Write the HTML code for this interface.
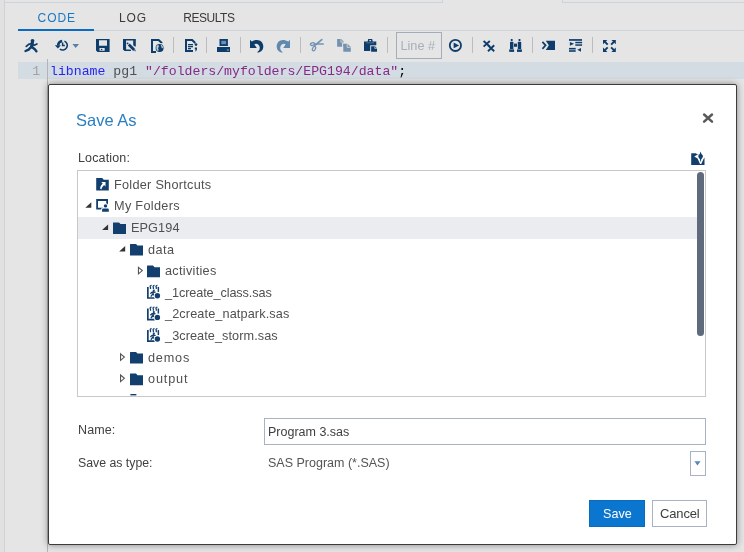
<!DOCTYPE html>
<html><head><meta charset="utf-8">
<style>
*{margin:0;padding:0;box-sizing:border-box}
html,body{width:744px;height:552px;overflow:hidden;background:#e5e5e5;font-family:"Liberation Sans",sans-serif}
#w{position:absolute;left:0;top:0;width:744px;height:552px;overflow:hidden;background:#e5e5e5;will-change:transform}
.a{position:absolute}
.t{position:absolute;white-space:nowrap;line-height:1}
.sep{position:absolute;top:37px;width:1px;height:16px;background:#bcbcbc}
.tr{position:absolute;white-space:nowrap;line-height:1;font-size:12.7px;color:#505050;letter-spacing:0.1px}
svg{position:absolute;left:0;top:0;overflow:visible}
</style></head><body><div id="w">
<div class="a" style="left:0;top:0;width:4px;height:552px;background:#e1e1e1"></div>
<div class="a" style="left:4px;top:0;width:1px;height:552px;background:#cfd3d8"></div>
<div class="a" style="left:4px;top:2px;width:438px;height:1px;background:#cdd3da"></div>
<div class="a" style="left:562px;top:2px;width:182px;height:1px;background:#cdd3da"></div>
<div class="a" style="left:442px;top:0;width:1px;height:3px;background:#cdd3da"></div>
<div class="a" style="left:562px;top:0;width:1px;height:3px;background:#cdd3da"></div>
<div class="t" style="left:37.6px;top:12px;font-size:12px;color:#1a78c2;letter-spacing:0.95px">CODE</div>
<div class="t" style="left:119px;top:12px;font-size:12px;color:#3a3a3a;letter-spacing:0.85px">LOG</div>
<div class="t" style="left:183.2px;top:12px;font-size:12px;color:#3a3a3a;letter-spacing:-0.45px">RESULTS</div>
<div class="a" style="left:94px;top:30px;width:650px;height:1px;background:#cfd4da"></div>
<div class="a" style="left:18px;top:29px;width:76px;height:2px;background:#0b6bc0"></div>
<div class="sep" style="left:173px"></div>
<div class="sep" style="left:206px"></div>
<div class="sep" style="left:240px"></div>
<div class="sep" style="left:300px"></div>
<div class="sep" style="left:387px"></div>
<div class="sep" style="left:472px"></div>
<div class="sep" style="left:532px"></div>
<div class="sep" style="left:592px"></div>
<div class="a" style="left:396px;top:32px;width:46px;height:27px;border:1px solid #a3acb9"></div>
<div class="t" style="left:400.5px;top:39.8px;font-size:12.7px;color:#a8b0bc">Line #</div>
<svg width="744" height="60">
 <circle cx="32.5" cy="40.8" r="1.9" fill="#0f3d6b"/>
 <g fill="none" stroke="#0f3d6b" stroke-linecap="round" stroke-linejoin="round">
  <path d="M32.4 42.4 L31.6 46.8" stroke-width="3.2"/>
  <path d="M26.3 46.4 L28.6 44.3 L31.4 43.5" stroke-width="1.8"/>
  <path d="M32.8 44.8 L34.8 45.1 L36.9 44" stroke-width="1.7"/>
  <path d="M31 47.2 L28.6 49.6 L25.5 51" stroke-width="2.4"/>
  <path d="M32.2 47.2 L34.8 49.2 L36.4 51.2" stroke-width="2.4"/>
 </g>
 <g fill="none" stroke="#0f3d6b">
  <path d="M64.42 41.13 A4.6 4.6 0 1 1 59.87 49.02" stroke-width="1.6"/>
  <path d="M62.6 42.4 V45.5 H64.9" stroke-width="1.5"/>
  <path d="M62.18 41.13 A4.3 4.3 0 0 0 58.2 45.4" stroke-width="2.7"/>
 </g>
 <polygon points="54.9,45.2 60.9,45.2 57.9,48.4" fill="#0f3d6b"/>
 <polygon points="72.4,44 79,44 75.7,48" fill="#5b7fa8"/>
 <path fill="#0f3d6b" fill-rule="evenodd" d="M96 39 H109.6 V52 H97.6 L96 50.4 Z M99 40.3 V45.8 H107 V40.3 Z M99.5 48.1 V50.8 H104.7 V48.1 Z"/>
 <circle cx="101.6" cy="49.45" r="0.8" fill="#0f3d6b"/>
 <path fill="#0f3d6b" d="M123 39 H135.8 V46.6 H133.2 V40.5 H126.1 V49.4 H131 V51.1 H124.6 L123 49.5 Z"/>
 <path d="M128 43.6 L135 50.6" stroke="#e5e5e5" stroke-width="5" stroke-linecap="butt"/>
 <path d="M128.8 44.6 L134.2 50" stroke="#0f3d6b" stroke-width="2.8" stroke-linecap="butt"/>
 <path d="M134 50.6 L135.8 51.6 L135.2 49.6 Z" fill="#0f3d6b"/>
 <circle cx="127.6" cy="43.4" r="0.9" fill="#0f3d6b"/>
 <path d="M156 52 H152 V40 H158.6 L162 43.3" fill="none" stroke="#0f3d6b" stroke-width="2"/>
 <circle cx="159.6" cy="47.9" r="5" fill="#e5e5e5"/>
 <circle cx="159.6" cy="47.9" r="4" fill="#0f3d6b"/>
 <path d="M156.4 46.2 Q157.6 44.8 158.6 45.2 L158.9 46.6 L158 48.2 L158.8 50.2 L157.6 51 Q155.8 49.6 156.4 46.2 Z M160.6 44.3 Q162.6 45.2 163.2 47.2 L162 48.4 L161.4 47 Z" fill="#e5e5e5" opacity="0.85"/>
 <path d="M193 51 H186 V40 H192.2 L195.2 43" fill="none" stroke="#0f3d6b" stroke-width="2"/>
 <rect x="188" y="44" width="5" height="1.3" fill="#0f3d6b"/>
 <rect x="188" y="46" width="5" height="1.3" fill="#0f3d6b"/>
 <rect x="188" y="48" width="3" height="1.3" fill="#0f3d6b"/>
 <circle cx="196" cy="44.6" r="1.35" fill="#0f3d6b"/>
 <path d="M194.8 47.4 H197 V49.6 L195.8 51.4 L195.2 51 L195.8 49.6 H194.8 Z" fill="#0f3d6b"/>
 <rect x="220.4" y="39.9" width="6.6" height="5.2" fill="#6f8fae" stroke="#0f3d6b" stroke-width="1.8"/>
 <rect x="217" y="47" width="13" height="5" fill="#0f3d6b"/>
 <rect x="226.8" y="49.3" width="2.2" height="1.4" fill="#6f8fae"/>
 <path fill="#0f3d6b" d="M250 39.8 L251.7 41.6 C253.4 40.5 255.2 40 257 40 C260.6 40 263.3 42.8 263.3 46.4 C263.3 49.9 260.8 52.3 257.6 52.5 L257.2 52.1 C259.1 51 260 49.2 259.7 47.2 C259.4 45 257.8 43.7 256.1 43.7 C255.4 43.7 254.8 43.9 254.3 44.3 L256.8 48 H250 Z"/>
 <g transform="translate(540 0) scale(-1 1)">
  <path fill="#6189b0" d="M250 39.8 L251.7 41.6 C253.4 40.5 255.2 40 257 40 C260.6 40 263.3 42.8 263.3 46.4 C263.3 49.9 260.8 52.3 257.6 52.5 L257.2 52.1 C259.1 51 260 49.2 259.7 47.2 C259.4 45 257.8 43.7 256.1 43.7 C255.4 43.7 254.8 43.9 254.3 44.3 L256.8 48 H250 Z"/>
 </g>
 <g fill="none" stroke="#7393b3" stroke-linecap="round">
  <ellipse cx="312.5" cy="44.1" rx="2.1" ry="1.3" transform="rotate(-12 312.5 44.1)" stroke-width="1.3"/>
  <ellipse cx="314" cy="48.6" rx="1.4" ry="2.3" transform="rotate(25 314 48.6)" stroke-width="1.3"/>
  <path d="M314.6 45.6 L321.8 39.6" stroke-width="1.7"/>
  <path d="M315 44.1 L323.2 43.9" stroke-width="1.5"/>
 </g>
 <path fill="#7591ae" d="M337.1 39.1 H341.2 L343.9 41.8 V46.8 H337.1 Z"/>
 <path d="M340.9 39.3 V42.1 H343.7" fill="none" stroke="#e5e5e5" stroke-width="0.7"/>
 <path fill="none" stroke="#e5e5e5" stroke-width="1.2" d="M342.7 43.1 H347.6 L351.4 46.9 V52.4 H342.7 Z"/>
 <path fill="#7591ae" d="M343.3 43.7 H347.4 L350.8 47.1 V51.8 H343.3 Z"/>
 <path d="M347.2 43.9 V47.3 H350.6" fill="none" stroke="#e5e5e5" stroke-width="0.8"/>
 <path fill="#0f3d6b" d="M364 41.6 H376.3 V51 H364 Z M367.6 41.8 L368.2 39 H372.2 L372.8 41.8 Z"/>
 <rect x="369.3" y="40.1" width="1.8" height="1.1" fill="#e5e5e5"/>
 <rect x="366.4" y="42.6" width="7.8" height="0.6" fill="#e5e5e5" opacity="0.55"/>
 <rect x="370.2" y="45.3" width="7.6" height="7.2" fill="#e5e5e5"/>
 <path fill="#0f3d6b" d="M371.1 46.2 H375 L377 48.2 V51.8 H371.1 Z"/>
 <path d="M374.8 46.4 V48.4 H376.8" fill="none" stroke="#e5e5e5" stroke-width="0.7"/>
 <circle cx="455.4" cy="45.4" r="5.6" fill="none" stroke="#0f3d6b" stroke-width="1.8"/>
 <polygon points="453.6,42.5 459.2,45.4 453.6,48.3" fill="#0f3d6b"/>
 <g stroke="#0f3d6b" stroke-width="1.9">
  <path d="M483.6 41 L489.8 46.6 M489.8 41 L483.6 46.6"/>
  <path d="M488 45.3 L494.2 51.2 M494.2 45.3 L488 51.2"/>
 </g>
 <g fill="#0f3d6b">
  <rect x="510.8" y="39" width="1.8" height="2.2"/>
  <rect x="510" y="41.9" width="3.4" height="7.1"/>
  <rect x="509.2" y="49.4" width="4.9" height="2.5"/>
  <rect x="518.6" y="39" width="1.8" height="2.2"/>
  <rect x="517.8" y="41.9" width="3.4" height="7.1"/>
  <rect x="517" y="49.4" width="4.9" height="2.5"/>
  <rect x="514" y="43.6" width="3" height="3.2"/>
 </g>
 <path d="M542.4 41.9 L545.6 45.35 L542.4 48.8" fill="none" stroke="#0f3d6b" stroke-width="1.7"/>
 <path fill="#0f3d6b" d="M545.8 40.8 H555 V49.9 H545.8 L548.8 45.35 Z"/>
 <g fill="#0f3d6b">
  <rect x="569" y="39.1" width="13" height="1.7"/>
  <polygon points="569.9,41.9 574.1,43.8 569.9,45.7"/>
  <rect x="575.3" y="41.8" width="6.8" height="1.5"/>
  <rect x="575.3" y="44.3" width="6.8" height="1.5"/>
  <rect x="569" y="47.9" width="6.7" height="1.6"/>
  <rect x="569" y="50.2" width="6.7" height="1.6"/>
  <polygon points="581,47.9 577.3,49.85 581,51.8"/>
 </g>
 <g fill="#0f3d6b">
  <polygon points="603,39.9 607.4,39.9 603,44.3"/>
  <polygon points="615.8,39.9 611.4,39.9 615.8,44.3"/>
  <polygon points="603,52 607.4,52 603,47.6"/>
  <polygon points="615.8,52 611.4,52 615.8,47.6"/>
 </g>
 <g stroke="#0f3d6b" stroke-width="1.9">
  <path d="M604.6 41.5 L607.7 44.6 M614.2 41.5 L611.1 44.6 M604.6 50.4 L607.7 47.3 M614.2 50.4 L611.1 47.3"/>
 </g>
</svg>
<div class="a" style="left:18px;top:62px;width:726px;height:17px;background:#d3dbe3"></div>
<div class="a" style="left:47px;top:59px;width:1px;height:493px;background:#b4b4b4"></div>
<div class="t" style="left:32.3px;top:64.5px;font-family:'Liberation Mono',monospace;font-size:13.2px;color:#a3a3a3">1</div>
<div class="t" style="left:50px;top:64.5px;font-family:'Liberation Mono',monospace;font-size:13.2px;color:#505050"><span style="color:#2626f2">libname</span> pg1 <span style="color:#872a87">"/folders/myfolders/EPG194/data"</span><span style="color:#000">;</span></div>
<div class="a" style="left:48px;top:84px;width:689px;height:461px;background:#fff;border:1px solid #3c3c3c;border-radius:2px;box-shadow:0 0 7px rgba(0,0,0,0.42)"></div>
<div class="t" style="left:76px;top:112px;font-size:16.5px;color:#2a7fc2">Save As</div>
<svg width="744" height="552"><path d="M704.1 114.5 L712 121.7 M712 114.5 L704.1 121.7" stroke="#5a5a5a" stroke-width="2.5" stroke-linecap="round"/></svg>
<div class="t" style="left:78px;top:152px;font-size:12.5px;color:#404040;letter-spacing:0.15px">Location:</div>
<div class="a" style="left:77px;top:170px;width:629px;height:227px;border:1px solid #c8c8c8;overflow:hidden"><div class="a" style="left:0;top:46.2px;width:619px;height:21.5px;background:#ebecef"></div><div class="a" style="left:619px;top:1px;width:7px;height:164px;border-radius:3.5px;background:#5f6b7d"></div></div>
<div class="tr" style="left:114px;top:178.75px;letter-spacing:0.27px">Folder Shortcuts</div>
<div class="tr" style="left:114px;top:200.35px;letter-spacing:0.31px">My Folders</div>
<div class="tr" style="left:131px;top:221.95px;letter-spacing:0.1px">EPG194</div>
<div class="tr" style="left:148px;top:243.55px;letter-spacing:0.43px">data</div>
<div class="tr" style="left:165px;top:265.15px;letter-spacing:0.29px">activities</div>
<div class="tr" style="left:165px;top:286.75px;letter-spacing:-0.11px">_1create_class.sas</div>
<div class="tr" style="left:165px;top:308.35px;letter-spacing:0.12px">_2create_natpark.sas</div>
<div class="tr" style="left:165px;top:329.95px;letter-spacing:0.07px">_3create_storm.sas</div>
<div class="tr" style="left:148px;top:351.55px;letter-spacing:0.8px">demos</div>
<div class="tr" style="left:148px;top:373.15px;letter-spacing:0.84px">output</div>
<svg width="744" height="552"><path fill="#133f6e" d="M96.2 178.1 H102.3 L103.7 179.7 H108.8 V190.6 H96.2 Z"/><path fill="#fff" d="M101.2 182.1 H105.5 V186.4 L104.1 185 C102.8 186.2 101.9 187.6 101.3 189.6 L100 188.2 C100.5 186.4 101.5 184.9 102.7 183.6 Z"/><path fill="none" stroke="#133f6e" stroke-width="1.8" d="M103 208.7 H97.1 V200 H107.1 V205"/><circle cx="105.5" cy="206" r="2.7" fill="#fff"/><circle cx="105.5" cy="206" r="1.75" fill="#133f6e"/><path fill="#fff" d="M101 212.4 V209.4 Q101 207.8 102.8 207.8 H108 Q110 207.8 110 209.4 V212.4 Z"/><path fill="#133f6e" d="M102.1 211.8 V209.6 Q102.1 208.6 103.2 208.6 H107.7 Q108.8 208.6 108.8 209.6 V211.8 Z"/><path fill="#133f6e" d="M113 222.8 Q113 222.4 113.4 222.4 H119 L120.5 224.0 H126 V234.0 H113 Z"/><path fill="#133f6e" d="M130 244.4 Q130 244.0 130.4 244.0 H136 L137.5 245.6 H143 V255.6 H130 Z"/><path fill="#133f6e" d="M147 266.0 Q147 265.6 147.4 265.6 H153 L154.5 267.20000000000005 H160 V277.20000000000005 H147 Z"/><path fill="#133f6e" d="M130 352.4 Q130 352.0 130.4 352.0 H136 L137.5 353.6 H143 V363.6 H130 Z"/><path fill="#133f6e" d="M130 374.0 Q130 373.6 130.4 373.6 H136 L137.5 375.20000000000005 H143 V385.20000000000005 H130 Z"/><rect x="130.4" y="394" width="6" height="1.4" fill="#133f6e"/><polygon fill="#333" points="91.3,202.2 91.3,207.79999999999998 85.3,207.79999999999998"/><polygon fill="#333" points="108.1,224.4 108.1,230.0 102.1,230.0"/><polygon fill="#333" points="125.2,245.9 125.2,251.5 119.2,251.5"/><polygon fill="none" stroke="#555" stroke-width="1.1" points="138.45000000000002,267.3 142.3,270.59999999999997 138.45000000000002,273.9"/><polygon fill="none" stroke="#555" stroke-width="1.1" points="120.55,353.8 124.4,357.09999999999997 120.55,360.4"/><polygon fill="none" stroke="#555" stroke-width="1.1" points="120.55,375.0 124.4,378.29999999999995 120.55,381.59999999999997"/><path fill="none" stroke="#133f6e" stroke-width="1.7" d="M147.85 286.9 V298.0 H154.8"/><rect x="157.6" y="286.9" width="1.5" height="5" fill="#133f6e"/><path fill="none" stroke="#133f6e" stroke-width="1.25" d="M151.6 285.4 Q149.9 285.4 150.20000000000002 287.2 M150.5 287.09999999999997 V289.09999999999997"/><path fill="none" stroke="#133f6e" stroke-width="1.25" d="M154.5 285.4 Q152.8 285.4 153.10000000000002 287.2 M153.4 287.09999999999997 V289.09999999999997"/><path fill="none" stroke="#133f6e" stroke-width="1.25" d="M157.39999999999998 285.4 Q155.7 285.4 156.0 287.2 M156.29999999999998 287.09999999999997 V289.09999999999997"/><circle cx="153.8" cy="290.5" r="1.1" fill="#133f6e"/><path fill="none" stroke="#133f6e" stroke-width="1.4" stroke-linecap="round" d="M153.5 291.5 L152.9 293.9 M150.8 293.29999999999995 L152.2 292.09999999999997 L153.4 291.9 L155.1 292.29999999999995 M152.9 293.9 L151.2 296.09999999999997 M153 293.9 L154.6 295.5"/><circle cx="157.4" cy="295.79999999999995" r="3.5" fill="#fff"/><circle cx="157.4" cy="295.79999999999995" r="2.7" fill="#133f6e"/><path fill="none" stroke="#133f6e" stroke-width="1.7" d="M147.85 308.5 V319.6 H154.8"/><rect x="157.6" y="308.5" width="1.5" height="5" fill="#133f6e"/><path fill="none" stroke="#133f6e" stroke-width="1.25" d="M151.6 307.0 Q149.9 307.0 150.20000000000002 308.8 M150.5 308.7 V310.7"/><path fill="none" stroke="#133f6e" stroke-width="1.25" d="M154.5 307.0 Q152.8 307.0 153.10000000000002 308.8 M153.4 308.7 V310.7"/><path fill="none" stroke="#133f6e" stroke-width="1.25" d="M157.39999999999998 307.0 Q155.7 307.0 156.0 308.8 M156.29999999999998 308.7 V310.7"/><circle cx="153.8" cy="312.1" r="1.1" fill="#133f6e"/><path fill="none" stroke="#133f6e" stroke-width="1.4" stroke-linecap="round" d="M153.5 313.1 L152.9 315.5 M150.8 314.9 L152.2 313.7 L153.4 313.5 L155.1 313.9 M152.9 315.5 L151.2 317.7 M153 315.5 L154.6 317.1"/><circle cx="157.4" cy="317.4" r="3.5" fill="#fff"/><circle cx="157.4" cy="317.4" r="2.7" fill="#133f6e"/><path fill="none" stroke="#133f6e" stroke-width="1.7" d="M147.85 330.1 V341.20000000000005 H154.8"/><rect x="157.6" y="330.1" width="1.5" height="5" fill="#133f6e"/><path fill="none" stroke="#133f6e" stroke-width="1.25" d="M151.6 328.6 Q149.9 328.6 150.20000000000002 330.40000000000003 M150.5 330.3 V332.3"/><path fill="none" stroke="#133f6e" stroke-width="1.25" d="M154.5 328.6 Q152.8 328.6 153.10000000000002 330.40000000000003 M153.4 330.3 V332.3"/><path fill="none" stroke="#133f6e" stroke-width="1.25" d="M157.39999999999998 328.6 Q155.7 328.6 156.0 330.40000000000003 M156.29999999999998 330.3 V332.3"/><circle cx="153.8" cy="333.70000000000005" r="1.1" fill="#133f6e"/><path fill="none" stroke="#133f6e" stroke-width="1.4" stroke-linecap="round" d="M153.5 334.70000000000005 L152.9 337.1 M150.8 336.5 L152.2 335.3 L153.4 335.1 L155.1 335.5 M152.9 337.1 L151.2 339.3 M153 337.1 L154.6 338.70000000000005"/><circle cx="157.4" cy="339.0" r="3.5" fill="#fff"/><circle cx="157.4" cy="339.0" r="2.7" fill="#133f6e"/><path fill="#133f6e" d="M691.2 153.6 Q691.2 153.2 691.6 153.2 H696 L697 154.2 H704.5 V165.1 H691.2 Z"/><path fill="#fff" d="M700.6 150 L702.4 153 L705 153 V157.4 L703.8 158.4 L701.2 164 H700 L697.6 158.6 L694.2 156.4 L698.4 154.2 Z"/><path fill="#133f6e" d="M700.6 151.6 Q701 154 702.6 155 Q703.3 156.3 702.6 157.6 Q701 158.8 700.6 162.4 Q700.2 158.8 698.6 157.6 Q697.9 156.3 698.6 155 Q700.2 154 700.6 151.6 Z"/></svg>
<div class="t" style="left:78px;top:423.5px;font-size:12.5px;color:#404040;letter-spacing:0.1px">Name:</div>
<div class="t" style="left:78px;top:457px;font-size:12.3px;color:#404040">Save as type:</div>
<div class="a" style="left:264px;top:418px;width:442px;height:27px;border:1px solid #a8b2c2"></div>
<div class="t" style="left:268px;top:425.5px;font-size:12.5px;color:#404040">Program 3.sas</div>
<div class="t" style="left:268px;top:457px;font-size:12.5px;color:#555">SAS Program (*.SAS)</div>
<div class="a" style="left:690px;top:451px;width:16px;height:25px;border:1px solid #a8b2c2"></div>
<svg width="744" height="552"><polygon points="694.4,461.2 700.6,461.2 697.5,465.4" fill="#5b86b8"/></svg>
<div class="a" style="left:589px;top:500px;width:56px;height:27px;background:#0b76cf;border:1px solid #096cbf"></div>
<div class="t" style="left:603px;top:507.6px;font-size:12.6px;color:#fff">Save</div>
<div class="a" style="left:652px;top:500px;width:55px;height:27px;border:1px solid #a8b2c2"></div>
<div class="t" style="left:660px;top:506.6px;font-size:13px;color:#3d3d3d;letter-spacing:-0.15px">Cancel</div>
</div></body></html>
